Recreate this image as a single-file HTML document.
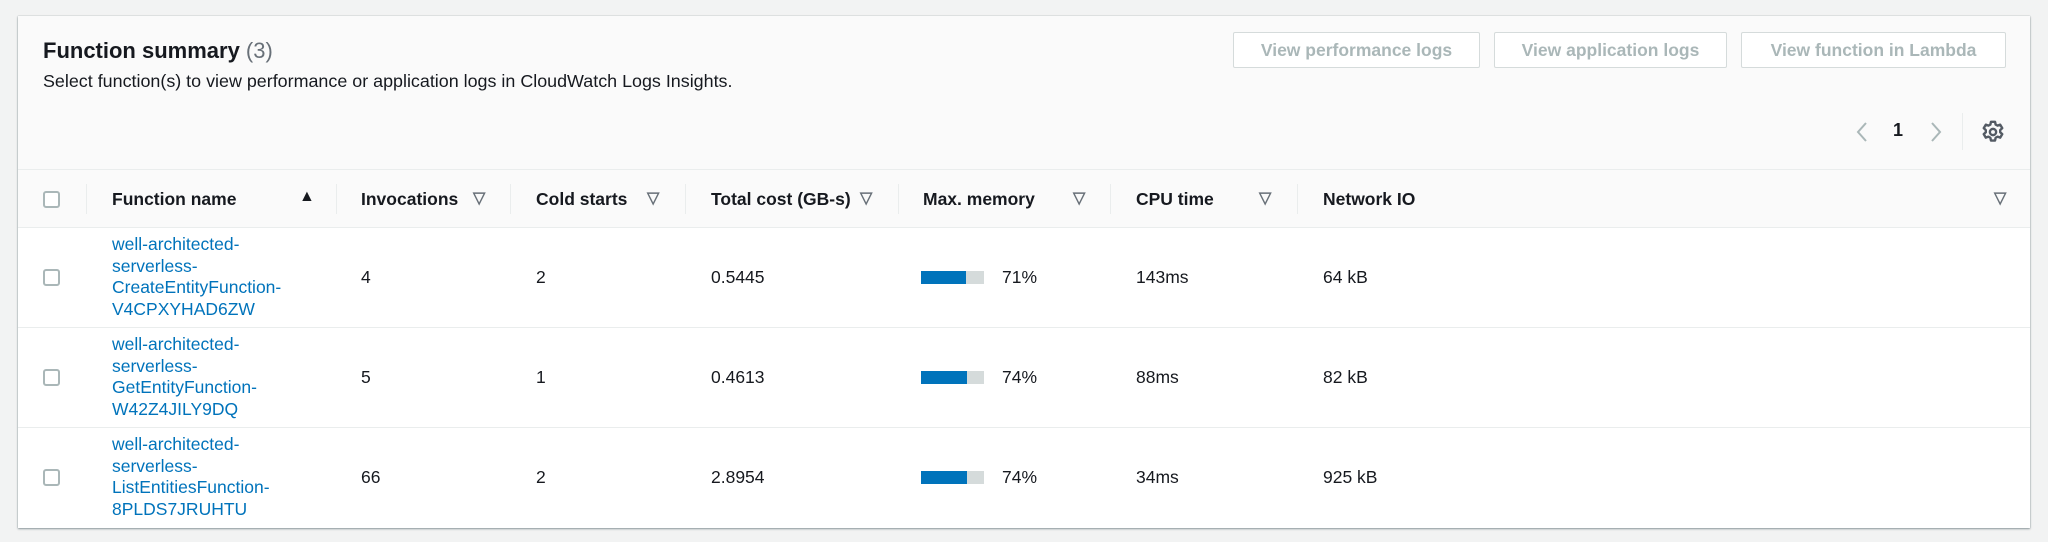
<!DOCTYPE html>
<html><head><meta charset="utf-8"><style>
*{box-sizing:border-box;margin:0;padding:0}
body{width:2048px;height:542px;background:#f2f3f3;font-family:"Liberation Sans",sans-serif;color:#16191f;position:relative;overflow:hidden;font-size:18px}
.card{position:absolute;left:18px;top:16px;width:2012px;height:512px;background:#fafafa;box-shadow:0 1px 2px rgba(0,28,36,.4),0 0 1px rgba(0,28,36,.3)}
.a{position:absolute;white-space:nowrap}
.title{left:25px;top:22px;font-size:22px;font-weight:bold}
.title span{font-weight:normal;color:#687078}
.sub{left:25px;top:55px;font-size:17.9px}
.btn{position:absolute;top:16px;height:36px;border:1px solid #d5dbdb;border-radius:2px;background:#fff;color:#aab7b8;font-weight:bold;font-size:17.5px;line-height:34px;text-align:center}
.hdr{position:absolute;left:0;top:153px;width:2012px;height:59px;border-top:1px solid #eaeded;border-bottom:1px solid #eaeded;background:#fafafa}
.h{position:absolute;top:19px;font-weight:bold;font-size:17.5px}
.div{position:absolute;top:14px;width:1px;height:30px;background:#eaeded}
.tri{position:absolute;top:18px;font-size:16px;color:#687078;font-weight:bold}
.row{position:absolute;left:0;width:2012px;height:100px;background:#fff;border-bottom:1px solid #eaeded}
.cb{position:absolute;left:25px;width:17px;height:17px;border:2px solid #aab7b8;border-radius:3px;background:#fff}
.lnk{position:absolute;left:94px;color:#0073bb;font-size:17.5px;line-height:21.7px;top:6px}
.c{position:absolute;top:39px;font-size:17.5px}
.bar{position:absolute;left:903px;top:43px;width:63px;height:13px;background:#d5dbdb}
.bar i{display:block;height:13px;background:#0073bb}
</style></head><body>
<div class="card">
<div class="a title">Function summary <span>(3)</span></div>
<div class="a sub">Select function(s) to view performance or application logs in CloudWatch Logs Insights.</div>
<div class="btn" style="left:1215px;width:247px">View performance logs</div>
<div class="btn" style="left:1476px;width:233px">View application logs</div>
<div class="btn" style="left:1723px;width:265px">View function in Lambda</div>
<svg class="a" style="left:1836px;top:104px" width="16" height="24" viewBox="0 0 16 24"><path d="M12 3 L4 12 L12 21" fill="none" stroke="#aab7b8" stroke-width="2"/></svg>
<div class="a" style="left:1875px;top:104px;font-weight:bold;font-size:18px">1</div>
<svg class="a" style="left:1910px;top:104px" width="16" height="24" viewBox="0 0 16 24"><path d="M4 3 L12 12 L4 21" fill="none" stroke="#aab7b8" stroke-width="2"/></svg>
<div class="a" style="left:1944px;top:97px;width:1px;height:37px;background:#eaeded"></div>
<svg class="a" style="left:1963px;top:104px" width="24" height="24" viewBox="0 0 20 20"><path d="M8.3 1.5h3.4l.5 2.3 1.6.9 2.2-.8 1.7 2.9-1.7 1.6v1.8l1.7 1.6-1.7 2.9-2.2-.8-1.6.9-.5 2.3H8.3l-.5-2.3-1.6-.9-2.2.8-1.7-2.9 1.7-1.6V8.4L2.3 6.8 4 3.9l2.2.8 1.6-.9z" fill="none" stroke="#545b64" stroke-width="2" stroke-linejoin="round"/><circle cx="10" cy="10" r="2.6" fill="none" stroke="#545b64" stroke-width="2"/></svg>
<div class="hdr">
<div class="cb" style="top:21px"></div>
<div class="div" style="left:68px"></div><div class="div" style="left:318px"></div><div class="div" style="left:492px"></div><div class="div" style="left:667px"></div><div class="div" style="left:880px"></div><div class="div" style="left:1092px"></div><div class="div" style="left:1279px"></div>
<div class="h" style="left:94px">Function name</div><div class="tri" style="left:281px;color:#16191f">▲</div>
<div class="h" style="left:343px">Invocations</div><div class="tri" style="left:455px">▽</div>
<div class="h" style="left:518px">Cold starts</div><div class="tri" style="left:629px">▽</div>
<div class="h" style="left:693px">Total cost (GB-s)</div><div class="tri" style="left:842px">▽</div>
<div class="h" style="left:905px">Max. memory</div><div class="tri" style="left:1055px">▽</div>
<div class="h" style="left:1118px">CPU time</div><div class="tri" style="left:1241px">▽</div>
<div class="h" style="left:1305px">Network IO</div><div class="tri" style="left:1976px">▽</div>
</div>
<div class="row" style="top:212px">
<div class="cb" style="top:41px"></div>
<div class="lnk">well-architected-<br>serverless-<br>CreateEntityFunction-<br>V4CPXYHAD6ZW</div>
<div class="c" style="left:343px">4</div><div class="c" style="left:518px">2</div><div class="c" style="left:693px">0.5445</div>
<div class="bar"><i style="width:45px"></i></div><div class="c" style="left:984px">71%</div>
<div class="c" style="left:1118px">143ms</div><div class="c" style="left:1305px">64 kB</div>
</div>
<div class="row" style="top:312px">
<div class="cb" style="top:41px"></div>
<div class="lnk">well-architected-<br>serverless-<br>GetEntityFunction-<br>W42Z4JILY9DQ</div>
<div class="c" style="left:343px">5</div><div class="c" style="left:518px">1</div><div class="c" style="left:693px">0.4613</div>
<div class="bar"><i style="width:46px"></i></div><div class="c" style="left:984px">74%</div>
<div class="c" style="left:1118px">88ms</div><div class="c" style="left:1305px">82 kB</div>
</div>
<div class="row" style="top:412px;border-bottom:none">
<div class="cb" style="top:41px"></div>
<div class="lnk">well-architected-<br>serverless-<br>ListEntitiesFunction-<br>8PLDS7JRUHTU</div>
<div class="c" style="left:343px">66</div><div class="c" style="left:518px">2</div><div class="c" style="left:693px">2.8954</div>
<div class="bar"><i style="width:46px"></i></div><div class="c" style="left:984px">74%</div>
<div class="c" style="left:1118px">34ms</div><div class="c" style="left:1305px">925 kB</div>
</div>
</div>
</body></html>
